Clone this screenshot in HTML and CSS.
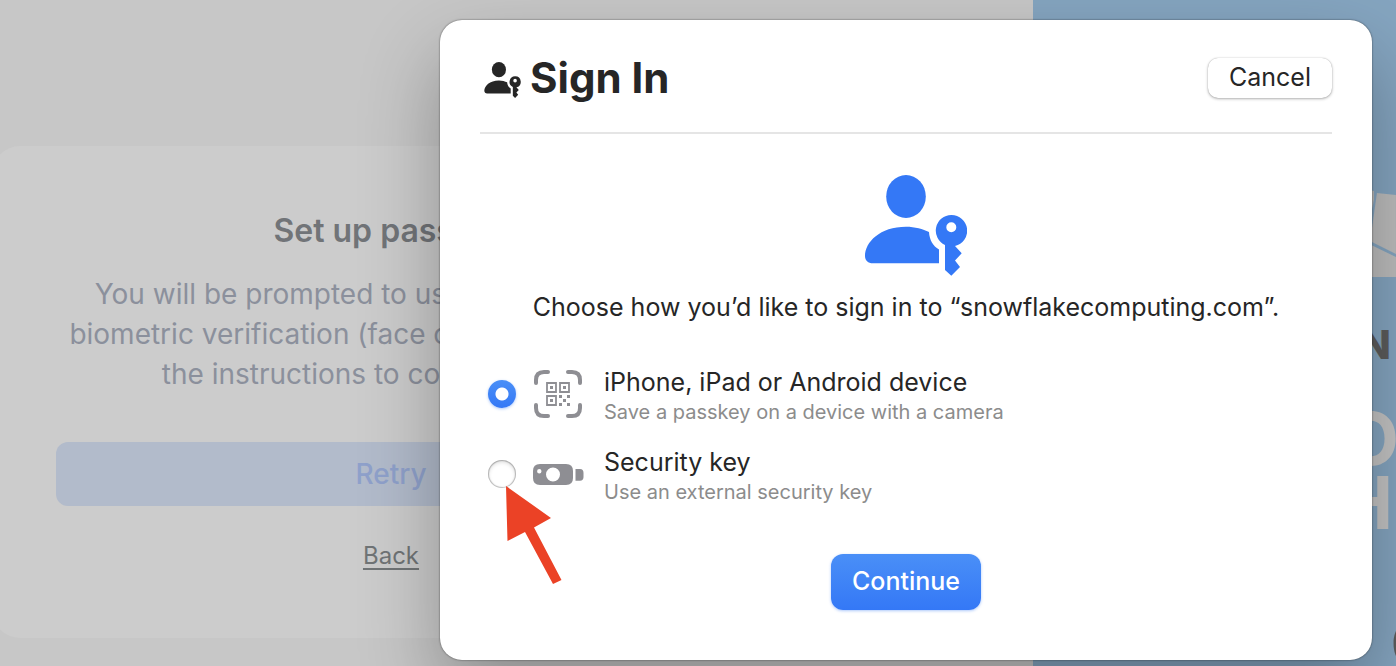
FILE: index.html
```html
<!DOCTYPE html>
<html lang="en">
<head>
    <meta charset="UTF-8">
    <meta name="viewport" content="width=device-width, initial-scale=1.0">
    <title>Sign In</title>
    <link rel="stylesheet" href="styles.css">
</head>
<body>
    <!-- Shared icon -->
    <svg class="symbols" aria-hidden="true">
        <symbol id="passkey" viewBox="0 0 102 101">
            <ellipse cx="41" cy="21.5" rx="19.8" ry="21.5"/>
            <path d="M0 81C0 67 15 51.7 41 51.7C50 51.7 58 54 64 57C64.500 65 68 71 74 74.500V88.300H8C3 88.300 0 85.500 0 81Z"/>
            <path fill-rule="evenodd" d="M86.300 40A15.700 15.700 0 0 1 90 71L96.700 78.300L90 85.500L95 92L86.300 100.700L80 95V70A15.700 15.700 0 0 1 86.300 40ZM86.300 47.300A5 5 0 1 0 86.300 57.300A5 5 0 1 0 86.300 47.300Z"/>
        </symbol>
    </svg>

    <div class="page">
        <main class="setup">
            <div class="setup-card">
                <h2 class="setup-title">Set up passkey</h2>
                <p class="setup-text">You will be prompted to use a device pin and<br>biometric verification (face or fingerprint), follow<br>the instructions to complete setup.</p>
                <button class="retry-button" type="button">Retry</button>
                <a class="back-link" href="#">Back</a>
            </div>
        </main>
        <aside class="promo">
            <svg class="promo-art" viewBox="0 0 363 666" preserveAspectRatio="xMaxYMin slice">
                <g fill="#bdbdbd">
                    <path d="M330 188L341 191V200L338 214H330Z"/>
                    <path d="M344 193L363 195V254L339 242L339 228Z"/>
                    <path d="M330 241L363 257V277H330Z"/>
                </g>
                <text class="promo-small" x="358" y="359" text-anchor="end">N</text>
                <text class="promo-large" x="366" y="465" text-anchor="end">O</text>
                <text class="promo-large" x="360" y="529" text-anchor="end">H</text>
                <text class="promo-small promo-next" x="358" y="667">C</text>
            </svg>
        </aside>
    </div>

    <div class="overlay">
        <form class="dialog" role="dialog" aria-labelledby="dialog-title">
            <header class="dialog-header">
                <svg class="title-icon"><use href="#passkey"/></svg>
                <h1 class="dialog-title" id="dialog-title">Sign In</h1>
                <button class="cancel-button" type="button">Cancel</button>
            </header>

            <svg class="hero-icon"><use href="#passkey"/></svg>
            <p class="prompt">Choose how you’d like to sign in to “snowflakecomputing.com”.</p>

            <div class="options">
                <label class="option" for="device">
                    <input class="option-radio" type="radio" name="method" id="device" checked>
                    <svg class="option-icon" viewBox="0 0 52 52">
                        <g fill="none" stroke="#8e8e93" stroke-width="4" stroke-linecap="round">
                            <path d="M4 15V12Q4 4 12 4H16M36 4H40Q48 4 48 12V15M4 37V40Q4 48 12 48H16M36 48H40Q48 48 48 40V37"/>
                        </g>
                        <g fill="none" stroke="#8e8e93" stroke-width="1.8">
                            <path d="M15 15h9v9h-9zM28 15h9v9h-9zM15 28h9v9h-9z"/>
                        </g>
                        <path fill="#8e8e93" d="M18 18h3v3h-3zM31 18h3v3h-3zM18 31h3v3h-3zM27 27h3v3h-3zM35 27h3v3h-3zM31 31h3v3h-3zM27 35h3v3h-3zM35 35h3v3h-3z"/>
                    </svg>
                    <span class="option-body">
                        <span class="option-name">iPhone, iPad or Android device</span>
                        <span class="option-hint">Save a passkey on a device with a camera</span>
                    </span>
                </label>
                <label class="option" for="security-key">
                    <input class="option-radio" type="radio" name="method" id="security-key">
                    <svg class="option-icon" viewBox="0 0 52 52">
                        <path fill="#8e8e93" fill-rule="evenodd" d="M8 16H34Q41 16 41 23V30Q41 37 34 37H8Q1 37 1 30V23Q1 16 8 16ZM7.300 21A2.200 2.200 0 1 0 7.300 25.400A2.200 2.200 0 1 0 7.300 21ZM21 19.500A7 7 0 1 0 21 33.500A7 7 0 1 0 21 19.500Z"/>
                        <path fill="#8e8e93" d="M43.500 21H48Q51.500 21 51.500 25V29Q51.500 32.700 48 32.700H43.500Z"/>
                    </svg>
                    <span class="option-body">
                        <span class="option-name">Security key</span>
                        <span class="option-hint">Use an external security key</span>
                    </span>
                    <!-- Arrow pointing at the radio -->
                    <svg class="pointer" viewBox="0 0 56 98">
                        <path fill="#eb4226" d="M0 0L45 32L28 41.500L55.500 94L47 98L19 46L1.500 55Z"/>
                    </svg>
                </label>
            </div>

            <button class="continue-button" type="submit">Continue</button>
        </form>
    </div>
</body>
</html>
```
FILE: styles.css
```css
* {
    box-sizing: border-box;
}

body {
    margin: 0;
    height: 100vh;
    overflow: hidden;
    position: relative;
    font-family: Inter, "Liberation Sans", sans-serif;
    color: #262626;
}

h1, h2, p {
    margin: 0;
}

button {
    font-family: inherit;
}

.symbols {
    position: absolute;
    width: 0;
    height: 0;
}

/* Dimmed page behind the dialog */
.page {
    display: grid;
    grid-template-columns: 74% 26%;
    height: 100%;
}

.setup {
    background: #c7c7c7;
    padding-top: 146px;
}

.setup-card {
    width: 798px;
    margin-left: -8px;
    padding: 64px;
    border-radius: 28px;
    background: #cccccc;
    text-align: center;
}

.setup-title {
    color: #717478;
    font-size: 32px;
    font-weight: 600;
    line-height: 42px;
}

.setup-text {
    margin-top: 22px;
    color: #8b909c;
    font-size: 28px;
    line-height: 40px;
}

.retry-button {
    display: block;
    width: 100%;
    height: 64px;
    margin: 48px 0 32px;
    border: 0;
    border-radius: 12px;
    background: #b2bbcb;
    color: #8fa1cb;
    font-size: 28px;
    font-weight: 500;
}

.back-link {
    color: #707476;
    font-size: 24px;
    line-height: 36px;
    text-decoration-thickness: 2px;
    text-underline-offset: 4px;
}

.promo {
    background: #85a5c0;
}

.promo-art {
    display: block;
    width: 100%;
    height: 100%;
}

.promo-small {
    fill: #5c5c5c;
    font-size: 40px;
    font-weight: 800;
}

.promo-large {
    fill: #c4c4c4;
    font-size: 73px;
    font-weight: 700;
}

.promo-next {
    font-size: 64px;
}

/* Dialog */
.overlay {
    position: absolute;
    inset: 0;
    display: flex;
    justify-content: flex-end;
    align-items: flex-start;
    padding: 20px 24px;
}

.dialog {
    display: flex;
    flex-direction: column;
    align-items: center;
    width: 68%;
    min-width: 932px;
    padding: 36px 40px 50px;
    border-radius: 22px;
    background: #ffffff;
    box-shadow: 0 0 2px rgba(0, 0, 0, 0.6), 0 36px 80px rgba(0, 0, 0, 0.3);
}

.dialog-header {
    display: flex;
    align-items: center;
    gap: 9px;
    width: 100%;
    height: 78px;
    padding: 0 0 32px 4px;
    border-bottom: 2px solid #e5e5e5;
}

.title-icon {
    width: 37px;
    height: 36px;
    margin-top: 4px;
    fill: #262626;
}

.dialog-title {
    flex: 1;
    font-size: 42px;
    font-weight: 700;
    line-height: 44px;
}

.cancel-button {
    width: 124px;
    height: 40px;
    padding: 0 0 2px;
    border: 0;
    border-radius: 10px;
    background: #ffffff;
    color: #262626;
    box-shadow: 0 0 1px rgba(0, 0, 0, 0.3), 0 1px 3px rgba(0, 0, 0, 0.3);
    font-size: 25px;
}

.hero-icon {
    width: 122px;
    height: 101px;
    margin-top: 41px;
    padding-left: 20px;
    fill: #3478f6;
}

.prompt {
    margin-top: 15px;
    font-size: 25px;
    line-height: 32px;
    white-space: nowrap;
}

.options {
    width: 100%;
    padding: 31px 8px 0;
}

.option {
    position: relative;
    display: flex;
    align-items: center;
    height: 80px;
}

.option-radio {
    appearance: none;
    width: 28px;
    height: 28px;
    margin: 0 16px 0 0;
    border-radius: 50%;
    background: #ffffff;
    box-shadow: inset 0 0 1px 1px rgba(0, 0, 0, 0.25), inset 0 2px 4px rgba(0, 0, 0, 0.15);
}

.option-radio:checked {
    background: radial-gradient(circle, #ffffff 6px, transparent 7px), linear-gradient(#4a8ff7, #3478f6);
    box-shadow: 0 1px 3px rgba(52, 120, 246, 0.4);
}

.option-icon {
    width: 52px;
    height: 52px;
    margin-right: 20px;
}

.option-body {
    display: flex;
    flex-direction: column;
    padding-top: 4px;
}

.option-name {
    font-size: 25px;
    line-height: 32px;
}

.option-hint {
    color: #8c8c8c;
    font-size: 20px;
    line-height: 28px;
}

.pointer {
    position: absolute;
    left: 18px;
    top: 52px;
    width: 56px;
    height: 98px;
}

.continue-button {
    width: 150px;
    height: 56px;
    margin-top: 40px;
    padding: 0 0 3px;
    border: 0;
    border-radius: 12px;
    background: linear-gradient(#4a8ff7, #3478f6);
    color: #ffffff;
    box-shadow: 0 1px 3px rgba(52, 120, 246, 0.4);
    font-size: 25px;
    font-weight: 500;
}
```
